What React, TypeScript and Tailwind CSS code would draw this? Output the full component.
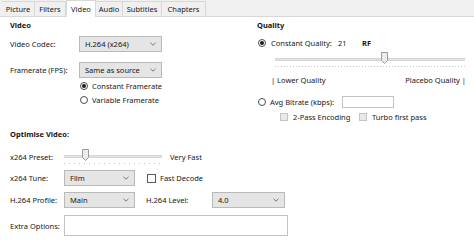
import type { ReactNode } from 'react'

const TABS = [
  { label: 'Picture', w: 'w-[33px]' },
  { label: 'Filters', w: 'w-[31px]' },
  { label: 'Video', w: 'w-[30px]', active: true },
  { label: 'Audio', w: 'w-[27px]' },
  { label: 'Subtitles', w: 'w-[39px]' },
  { label: 'Chapters', w: 'w-[44px]' },
]

function Chevron() {
  return (
    <svg width="6" height="4" viewBox="0 0 6 4" className="shrink-0">
      <path d="M0.5 0.8 L3 3.2 L5.5 0.8" fill="none" stroke="#6a6a6a" strokeWidth="0.9" />
    </svg>
  )
}

function Select({ value, w }: { value: string; w: string }) {
  return (
    <div className={`${w} h-[16px] flex items-center justify-between pl-[5px] pr-[5px] bg-[#e5e5e5] border border-[#b9b9b9]`}>
      <span>{value}</span>
      <Chevron />
    </div>
  )
}

function Radio({ checked }: { checked?: boolean }) {
  return (
    <div className="w-[8px] h-[8px] rounded-full border border-[#4d4d4d] bg-white flex items-center justify-center shrink-0">
      {checked && <div className="w-[4px] h-[4px] rounded-full bg-[#1a1a1a]" />}
    </div>
  )
}

function Check({ disabled }: { disabled?: boolean }) {
  return (
    <div
      className={
        disabled
          ? 'w-[8px] h-[8px] border border-[#c4c4c4] bg-[#e8e8e8] shrink-0'
          : 'w-[9px] h-[9px] border border-[#5a5a5a] bg-white shrink-0'
      }
    />
  )
}

function Thumb() {
  return (
    <svg width="7" height="12" viewBox="0 0 7 12" className="absolute top-0">
      <path d="M0.5 0.5 H6.5 V8.5 L3.5 11.5 L0.5 8.5 Z" fill="#ececec" stroke="#9a9a9a" strokeWidth="1" />
    </svg>
  )
}

function Slider({ w, thumbLeft, ticks }: { w: string; thumbLeft: string; ticks: string }) {
  return (
    <div className={`${w} relative h-[16px] shrink-0`}>
      <div className="absolute left-0 right-0 top-[6px] h-[3px] bg-[#e2e2e2] border-y border-[#d6d6d6]" />
      <div className={`absolute ${thumbLeft} top-0 w-[7px] h-[12px]`}>
        <Thumb />
      </div>
      <div className={`absolute left-0 right-0 top-[14px] h-[1px] ${ticks}`} />
    </div>
  )
}

function Row({ children, className = '' }: { children: ReactNode; className?: string }) {
  return <div className={`flex items-center ${className}`}>{children}</div>
}

export default function App() {
  return (
    <div className="w-[474px] h-[244px] bg-white text-[#161616] text-[7.5px] leading-[10px] overflow-hidden" style={{ fontFamily: '"Noto Sans", "Open Sans", sans-serif' }}>
      {/* Tabs */}
      <div className="h-[17px] bg-[#f0f0f0] border-b border-[#d8d8d8] flex items-end pl-[2px]">
        {TABS.map(t => (
          <div
            key={t.label}
            className={
              t.active
                ? `${t.w} h-[17px] -mb-px bg-white border-x border-t border-[#d8d8d8] flex items-center justify-center pb-[1px]`
                : `${t.w} h-[15px] bg-[#f0f0f0] border-t border-r border-[#d8d8d8] flex items-center justify-center`
            }
          >
            {t.label}
          </div>
        ))}
      </div>

      {/* Top section */}
      <div className="flex">
        {/* Video */}
        <div className="w-[257px] pl-[10px] pt-[3px]">
          <div className="font-bold h-[10px]">Video</div>
          <Row className="mt-[6px]">
            <div className="w-[69px]">Video Codec:</div>
            <Select value="H.264 (x264)" w="w-[83px]" />
          </Row>
          <Row className="mt-[10px]">
            <div className="w-[69px]">Framerate (FPS):</div>
            <Select value="Same as source" w="w-[83px]" />
          </Row>
          <Row className="mt-[3px] ml-[70px] gap-[4px] h-[10px]">
            <Radio checked />
            <span>Constant Framerate</span>
          </Row>
          <Row className="mt-[4px] ml-[70px] gap-[4px] h-[10px]">
            <Radio />
            <span>Variable Framerate</span>
          </Row>
        </div>

        {/* Quality */}
        <div className="flex-1 pt-[3px]">
          <div className="font-bold h-[10px]">Quality</div>
          <Row className="mt-[8px] h-[10px] ml-[1px]">
            <Radio checked />
            <span className="ml-[5px] w-[67px]">Constant Quality:</span>
            <span className="w-[24px]">21</span>
            <span className="font-bold">RF</span>
          </Row>
          <div className="mt-[4px] ml-[18px]">
            <Slider w="w-[190px]" thumbLeft="left-[106px]" ticks="bg-[repeating-linear-gradient(90deg,#c9c9c9_0_1px,transparent_1px_3px)]" />
          </div>
          <Row className="mt-[7px] ml-[14px] w-[195px] justify-between h-[10px]">
            <span>| Lower Quality</span>
            <span>Placebo Quality |</span>
          </Row>
          <Row className="mt-[11px] ml-[1px] h-[12px]">
            <Radio />
            <span className="ml-[4px] w-[72px]">Avg Bitrate (kbps):</span>
            <div className="w-[52px] h-[12px] border border-[#c2c2c2] bg-white" />
          </Row>
          <Row className="mt-[4px] ml-[23px] h-[10px]">
            <Check disabled />
            <span className="ml-[5px] w-[66px]">2-Pass Encoding</span>
            <Check disabled />
            <span className="ml-[5px]">Turbo first pass</span>
          </Row>
        </div>
      </div>

      {/* Optimise */}
      <div className="pl-[10px] mt-[7px]">
        <div className="font-bold h-[10px]">Optimise Video:</div>
        <Row className="mt-[10px]">
          <div className="w-[54px]">x264 Preset:</div>
          <Slider w="w-[98px]" thumbLeft="left-[18px]" ticks="bg-[repeating-linear-gradient(90deg,#c9c9c9_0_1px,transparent_1px_5px)]" />
          <span className="ml-[8px]">Very Fast</span>
        </Row>
        <Row className="mt-[5px]">
          <div className="w-[54px]">x264 Tune:</div>
          <Select value="Film" w="w-[71px]" />
          <div className="ml-[12px]">
            <Check />
          </div>
          <span className="ml-[4px]">Fast Decode</span>
        </Row>
        <Row className="mt-[6px]">
          <div className="w-[54px]">H.264 Profile:</div>
          <Select value="Main" w="w-[71px]" />
          <div className="ml-[11px] w-[66px]">H.264 Level:</div>
          <Select value="4.0" w="w-[73px]" />
        </Row>
        <Row className="mt-[7px]">
          <div className="w-[54px]">Extra Options:</div>
          <div className="w-[224px] h-[21px] border border-[#c2c2c2] bg-white" />
        </Row>
      </div>
    </div>
  )
}
